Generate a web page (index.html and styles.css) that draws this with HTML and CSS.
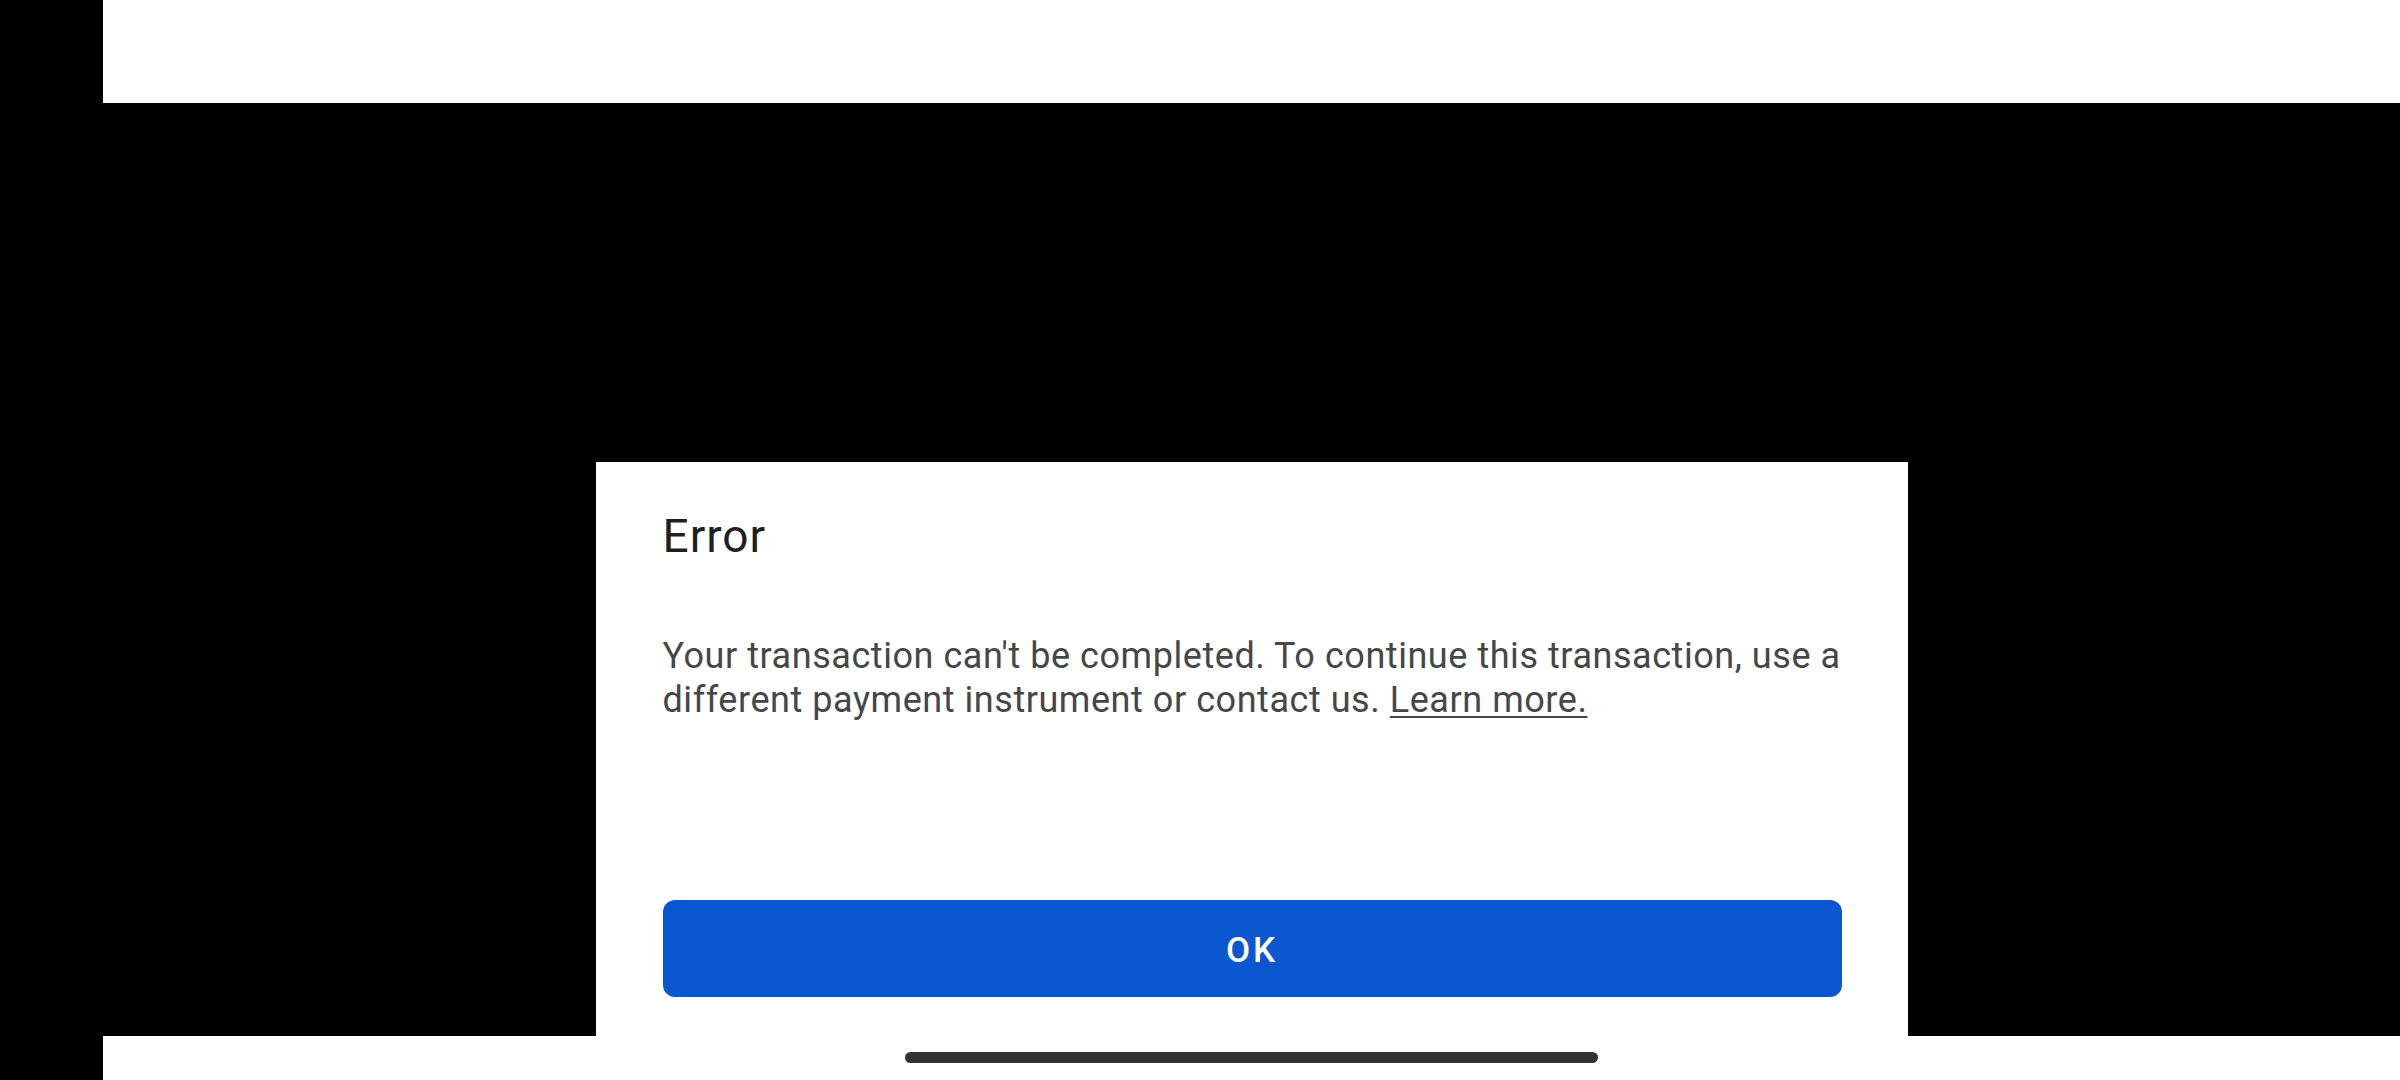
FILE: index.html
```html
<!DOCTYPE html>
<html>
<head>
    <title>Error</title>
    <link rel="stylesheet" href="styles.css">
</head>
<body>
    <div class="screen">
        <div class="side-strip"></div>
        <div class="main">
            <div class="top-bar"></div>
            <div class="scrim">
                <div class="dialog">
                    <h2 class="dialog-title">Error</h2>
                    <p class="dialog-text">Your transaction can't be completed. To continue this transaction, use a different payment instrument or contact us. <a href="#">Learn more.</a></p>
                    <button class="ok-button">OK</button>
                </div>
            </div>
            <div class="nav-bar">
                <div class="home-indicator"></div>
            </div>
        </div>
    </div>
</body>
</html>
```

FILE: styles.css
```css
body {
    margin: 0;
    overflow: hidden;
    background: #000;
    font-family: Roboto, 'Noto Sans', sans-serif;
}
.screen {
    display: flex;
    width: 2400px;
    height: 1080px;
}
.side-strip {
    width: 103px;
    flex-shrink: 0;
    background: #000;
}
.main {
    flex: 1;
    display: flex;
    flex-direction: column;
}
.top-bar {
    height: 103px;
    background: #fff;
}
.scrim {
    flex: 1;
    display: flex;
    flex-direction: column;
    justify-content: flex-end;
    align-items: center;
    background: #000;
}
.dialog {
    width: 1312px;
    box-sizing: border-box;
    background: #fff;
    padding: 46px 66px 39px 67px;
}
.dialog-title {
    margin: 0;
    font-size: 46px;
    line-height: 56px;
    font-weight: 400;
    letter-spacing: 1px;
    color: #1f1f1f;
}
.dialog-text {
    margin: 70px 0 178px;
    font-size: 36px;
    line-height: 44px;
    letter-spacing: 0.55px;
    color: #444746;
}
.dialog-text a {
    color: #444746;
    text-decoration: underline;
    text-decoration-thickness: 2px;
    text-underline-offset: 4px;
}
.ok-button {
    display: block;
    width: 100%;
    height: 97px;
    border: none;
    border-radius: 12px;
    background: #0b57d0;
    color: #fff;
    font-family: Roboto, sans-serif;
    font-size: 35px;
    font-weight: 500;
    letter-spacing: 3px;
    padding-top: 4px;
}
.nav-bar {
    height: 44px;
    background: #fff;
    display: flex;
    justify-content: center;
    align-items: center;
}
.home-indicator {
    width: 693px;
    height: 11px;
    border-radius: 6px;
    background: #333;
    margin-top: -1px;
}
```
